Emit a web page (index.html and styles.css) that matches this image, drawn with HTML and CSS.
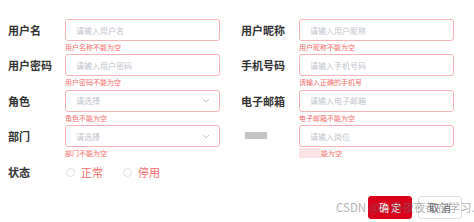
FILE: index.html
```html
<!DOCTYPE html>
<html lang="zh-CN">
<head>
    <meta charset="UTF-8">
    <title>用户表单</title>
    <link rel="stylesheet" href="styles.css">
</head>
<body>
    <form class="user-form">
        <div class="form-grid">
            <div class="form-item">
                <label class="item-label">用户名</label>
                <div class="item-control">
                    <input class="el-input" placeholder="请输入用户名">
                    <div class="error">用户名称不能为空</div>
                </div>
            </div>
            <div class="form-item">
                <label class="item-label">用户昵称</label>
                <div class="item-control">
                    <input class="el-input" placeholder="请输入用户昵称">
                    <div class="error">用户昵称不能为空</div>
                </div>
            </div>
            <div class="form-item">
                <label class="item-label">用户密码</label>
                <div class="item-control">
                    <input class="el-input" placeholder="请输入用户密码">
                    <div class="error">用户密码不能为空</div>
                </div>
            </div>
            <div class="form-item">
                <label class="item-label">手机号码</label>
                <div class="item-control">
                    <input class="el-input" placeholder="请输入手机号码">
                    <div class="error">请输入正确的手机号</div>
                </div>
            </div>
            <div class="form-item">
                <label class="item-label">角色</label>
                <div class="item-control">
                    <div class="el-select">
                        <span class="placeholder">请选择</span>
                        <svg class="arrow" width="8" height="5" viewBox="0 0 8 5"><path d="M1 1l3 3 3-3" fill="none" stroke="#c0c4cc" stroke-width="1"/></svg>
                    </div>
                    <div class="error">角色不能为空</div>
                </div>
            </div>
            <div class="form-item">
                <label class="item-label">电子邮箱</label>
                <div class="item-control">
                    <input class="el-input" placeholder="请输入电子邮箱">
                    <div class="error">电子邮箱不能为空</div>
                </div>
            </div>
            <div class="form-item">
                <label class="item-label">部门</label>
                <div class="item-control">
                    <div class="el-select">
                        <span class="placeholder">请选择</span>
                        <svg class="arrow" width="8" height="5" viewBox="0 0 8 5"><path d="M1 1l3 3 3-3" fill="none" stroke="#c0c4cc" stroke-width="1"/></svg>
                    </div>
                    <div class="error">部门不能为空</div>
                </div>
            </div>
            <div class="form-item">
                <label class="item-label"><span class="blur-label"></span></label>
                <div class="item-control">
                    <input class="el-input" placeholder="请输入岗位">
                    <div class="error"><span class="blur-error"></span>能为空</div>
                </div>
            </div>
        </div>

        <div class="form-item status-row">
            <label class="item-label">状态</label>
            <div class="radio-group">
                <span class="radio"><span class="radio-dot"></span>正常</span>
                <span class="radio"><span class="radio-dot"></span>停用</span>
            </div>
        </div>

        <div class="actions">
            <button type="button" class="btn btn-primary">确 定</button>
            <button type="button" class="btn">取 消</button>
        </div>

        <div class="watermark">CSDN @小扬夜夜都在学习.</div>
    </form>
</body>
</html>
```

FILE: styles.css
```css
* {
    margin: 0;
    padding: 0;
    box-sizing: border-box;
}

body {
    background-color: #fff;
    font-family: "Noto Sans CJK SC", "Noto Sans", sans-serif;
    color: #303133;
    width: 474px;
    height: 222px;
    overflow: hidden;
}

.user-form {
    position: relative;
    padding: 19px 0 0 8px;
    height: 222px;
}

.form-grid {
    display: grid;
    grid-template-columns: 233px 233px;
    grid-auto-rows: 35.4px;
}

.form-item {
    display: flex;
    align-items: flex-start;
}

.item-label {
    width: 57px;
    flex: none;
    height: 22px;
    line-height: 22px;
    font-size: 11px;
    font-weight: bold;
    color: #333;
}

.form-item:nth-child(even) .item-label {
    width: 58px;
}

.item-control {
    width: 155px;
}

.el-input,
.el-select {
    display: block;
    width: 155px;
    height: 22px;
    border: 1px solid #f5b3b7;
    border-radius: 3px;
    padding: 0 10px;
    font-size: 8px;
    font-family: inherit;
    outline: none;
    background: #fff;
}

.el-input::placeholder {
    color: #c0c4cc;
}

.el-select {
    display: flex;
    align-items: center;
    justify-content: space-between;
}

.placeholder {
    color: #c0c4cc;
}

.arrow {
    margin-right: -1px;
}

.error {
    font-size: 7px;
    line-height: 13px;
    height: 13px;
    color: #f56c6c;
    white-space: nowrap;
}

.blur-label {
    display: inline-block;
    width: 22px;
    height: 7px;
    margin: 7px 0 0 4px;
    background-color: #c4c4c4;
    vertical-align: top;
}

.blur-error {
    display: inline-block;
    width: 22px;
    height: 10px;
    margin-top: 1px;
    background-color: #fde3e5;
    vertical-align: top;
}

.status-row {
    margin-top: 0.5px;
}

.radio-group {
    display: flex;
    align-items: center;
    height: 22px;
}

.radio {
    display: flex;
    align-items: center;
    font-size: 11px;
    color: #f56c6c;
    margin-right: 20px;
}

.radio-dot {
    width: 9px;
    height: 9px;
    border: 1px solid #dcdfe6;
    border-radius: 50%;
    margin-right: 6px;
}

.actions {
    display: flex;
    justify-content: flex-end;
    gap: 6px;
    padding-right: 12px;
    margin-top: 13px;
}

.btn {
    width: 44px;
    height: 23px;
    border: 1px solid #dcdfe6;
    border-radius: 3px;
    background-color: #fff;
    color: #606266;
    font-size: 10px;
    font-family: inherit;
}

.btn-primary {
    background-color: #d9001b;
    border-color: #d9001b;
    color: #fff;
}

.watermark {
    position: absolute;
    left: 336px;
    top: 199px;
    font-size: 11.5px;
    color: rgba(110, 110, 110, 0.55);
    white-space: nowrap;
    pointer-events: none;
}
```
